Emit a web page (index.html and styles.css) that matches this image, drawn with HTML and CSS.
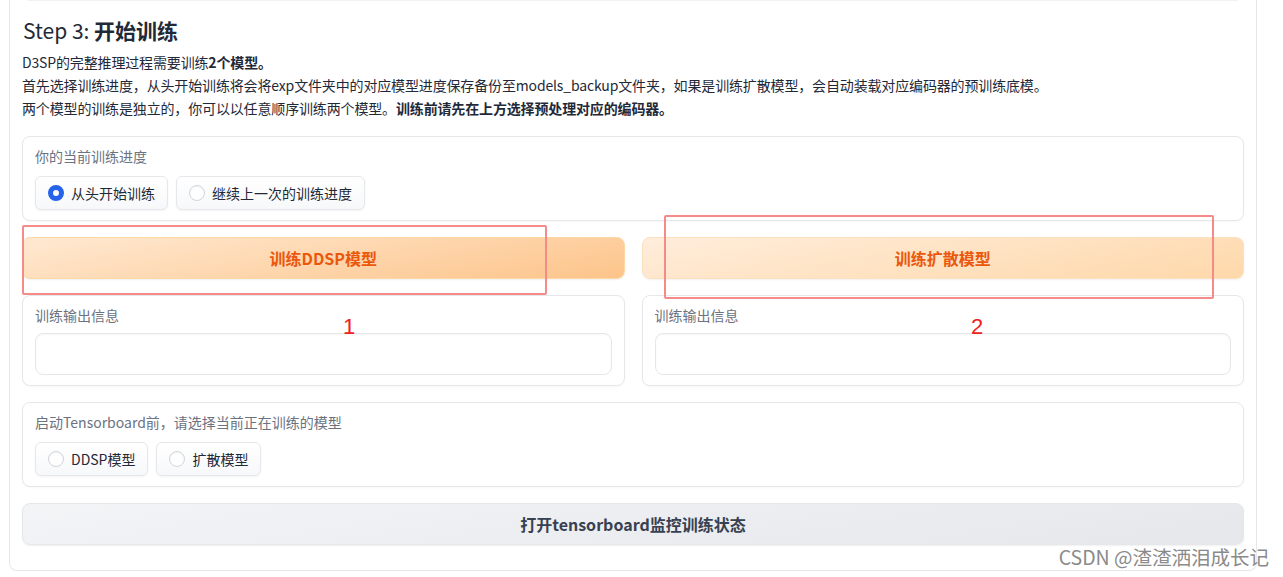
FILE: index.html
```html
<!DOCTYPE html>
<html>
<head>
    <title>DDSP-SVC 训练</title>
    <link rel="stylesheet" href="styles.css">
</head>
<body>
    <div class="panel">
        <div class="top-line"></div>
        <h2 class="step-title">Step 3: <b>开始训练</b></h2>
        <p class="intro">
            D3SP的完整推理过程需要训练<b>2个模型。</b><br>
            首先选择训练进度，从头开始训练将会将exp文件夹中的对应模型进度保存备份至models_backup文件夹，如果是训练扩散模型，会自动装载对应编码器的预训练底模。<br>
            两个模型的训练是独立的，你可以以任意顺序训练两个模型。<b>训练前请先在上方选择预处理对应的编码器。</b>
        </p>

        <div class="card">
            <div class="card-label">你的当前训练进度</div>
            <div class="radio-group">
                <label class="radio-item"><span class="radio checked"></span>从头开始训练</label>
                <label class="radio-item"><span class="radio"></span>继续上一次的训练进度</label>
            </div>
        </div>

        <div class="columns">
            <div class="column">
                <button class="btn btn-primary">训练DDSP模型</button>
                <div class="card">
                    <div class="card-label">训练输出信息</div>
                    <div class="output-box"></div>
                </div>
            </div>
            <div class="column">
                <button class="btn btn-light">训练扩散模型</button>
                <div class="card">
                    <div class="card-label">训练输出信息</div>
                    <div class="output-box"></div>
                </div>
            </div>
        </div>

        <div class="card">
            <div class="card-label">启动Tensorboard前，请选择当前正在训练的模型</div>
            <div class="radio-group">
                <label class="radio-item"><span class="radio"></span>DDSP模型</label>
                <label class="radio-item"><span class="radio"></span>扩散模型</label>
            </div>
        </div>

        <button class="btn btn-gray">打开tensorboard监控训练状态</button>
    </div>

    <!-- annotations drawn on top of the screenshot -->
    <div class="mark mark-1"></div>
    <div class="mark mark-2"></div>
    <div class="mark-num num-1">1</div>
    <div class="mark-num num-2">2</div>
    <div class="watermark">CSDN @渣渣洒泪成长记</div>
</body>
</html>
```

FILE: styles.css
```css
body {
    margin: 0;
    padding: 0;
    background-color: #fff;
    font-family: "Noto Sans CJK SC", "Noto Sans", sans-serif;
    color: #1f2937;
    position: relative;
    height: 577px;
    overflow: hidden;
}

.panel {
    margin-left: 9px;
    width: 1248px;
    box-sizing: border-box;
    border: 1px solid #e5e7eb;
    border-top: none;
    border-radius: 0 0 8px 8px;
    padding: 0 12px 25px;
}

.top-line {
    height: 1px;
    margin: 0 6px 0 6px;
    background-color: #f1f2f4;
}

.step-title {
    margin: 15px 0 0 1px;
    font-size: 21px;
    line-height: 28px;
    font-weight: 400;
    color: #1f2937;
}

.step-title b {
    font-weight: 700;
}

.intro {
    margin: 7px 0 0;
    font-size: 14px;
    line-height: 23px;
    letter-spacing: -0.15px;
    color: #1f2937;
}

.intro b {
    font-weight: 700;
}

.card {
    border: 1px solid #e5e7eb;
    border-radius: 8px;
    padding: 9px 12px 10px;
    background-color: #fff;
    box-shadow: 0 1px 2px rgba(0, 0, 0, 0.03);
}

.panel > .card {
    margin-top: 16px;
}

.card-label {
    font-size: 14px;
    line-height: 21px;
    color: #6b7280;
}

.radio-group {
    display: flex;
    gap: 8px;
    margin-top: 9px;
}

.radio-item {
    display: flex;
    align-items: center;
    gap: 7px;
    height: 34px;
    box-sizing: border-box;
    padding: 0 12px;
    border: 1px solid #e5e7eb;
    border-radius: 6px;
    background: linear-gradient(to bottom, #ffffff, #f7f8fa);
    box-shadow: 0 1px 2px rgba(0, 0, 0, 0.05);
    font-size: 14px;
    color: #1f2937;
}

.radio {
    width: 16px;
    height: 16px;
    box-sizing: border-box;
    border-radius: 50%;
    border: 1px solid #d1d5db;
    background-color: #fff;
    box-shadow: inset 0 1px 2px rgba(0, 0, 0, 0.05);
}

.radio.checked {
    border: 5px solid #2563eb;
    background-color: #fff;
}

.columns {
    display: grid;
    grid-template-columns: 1fr 1fr;
    gap: 17px;
    margin-top: 16px;
}

.column {
    display: flex;
    flex-direction: column;
    gap: 16px;
}

.output-box {
    margin-top: 7px;
    height: 42px;
    box-sizing: border-box;
    border: 1px solid #e5e7eb;
    border-radius: 8px;
    box-shadow: inset 0 1px 2px rgba(0, 0, 0, 0.04);
}

.btn {
    display: block;
    width: 100%;
    height: 42px;
    border-radius: 8px;
    font-family: "Noto Sans CJK SC", "Noto Sans", sans-serif;
    font-size: 16px;
    font-weight: 700;
    cursor: pointer;
}

.btn-primary {
    border: 1px solid #fdd8a5;
    background: linear-gradient(170deg, #ffe9d2 0%, #fdc48a 100%);
    color: #ea580c;
    box-shadow: 0 1px 2px rgba(0, 0, 0, 0.06);
}

.btn-light {
    border: 1px solid #fde0bd;
    background: linear-gradient(170deg, #ffeddb 0%, #fed8aa 100%);
    color: #ea580c;
    box-shadow: 0 1px 2px rgba(0, 0, 0, 0.06);
}

.btn-gray {
    margin-top: 16px;
    border: 1px solid #e5e7eb;
    background: linear-gradient(170deg, #f3f4f6 0%, #e5e7eb 100%);
    color: #374151;
    box-shadow: 0 1px 2px rgba(0, 0, 0, 0.06);
}

.mark {
    position: absolute;
    border: 2px solid #f58b89;
    border-radius: 2px;
    box-sizing: border-box;
}

.mark-1 {
    left: 22px;
    top: 225px;
    width: 525px;
    height: 70px;
}

.mark-2 {
    left: 664px;
    top: 215px;
    width: 550px;
    height: 84px;
}

.mark-num {
    position: absolute;
    font-family: "Liberation Sans", sans-serif;
    font-size: 22px;
    line-height: 24px;
    color: #f02020;
}

.num-1 {
    left: 343px;
    top: 315px;
}

.num-2 {
    left: 971px;
    top: 315px;
}

.watermark {
    position: absolute;
    right: 14px;
    top: 543px;
    font-family: "Noto Sans CJK SC", sans-serif;
    font-size: 19.5px;
    line-height: 28px;
    color: #8a8a8a;
    text-shadow: 0 0 2px #fff;
}
```
